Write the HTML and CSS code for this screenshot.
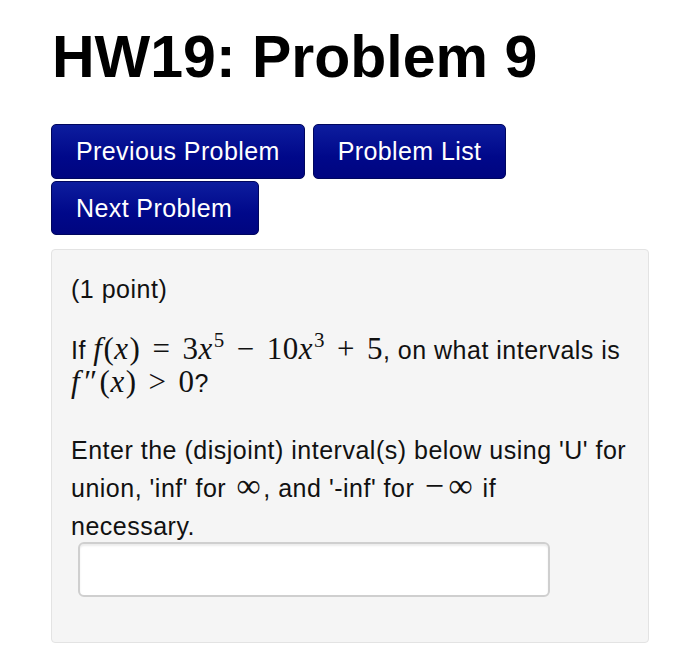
FILE: index.html
```html
<!DOCTYPE html>
<html lang="en">
<head>
    <meta charset="UTF-8">
    <meta name="viewport" content="width=device-width, initial-scale=1.0">
    <title>HW19: Problem 9</title>
    <link rel="stylesheet" href="styles.css">
</head>
<body>

    <!-- Title -->
    <h1 class="title">HW19: Problem 9</h1>

    <!-- Navigation -->
    <div class="nav">
        <a class="nav-btn" href="#">Previous Problem</a>
        <a class="nav-btn" href="#">Problem List</a>
        <a class="nav-btn" href="#">Next Problem</a>
    </div>

    <!-- Problem Body -->
    <div class="problem">
        <p class="points">(1 point)</p>

        <p class="question">
            If <span class="math"><i>f</i>(<i>x</i>)<span class="op">=</span>3<i>x</i><sup>5</sup><span class="op">&minus;</span>10<i>x</i><sup>3</sup><span class="op">+</span>5</span>, on what intervals is<br>
            <span class="math"><i>f</i><span class="prime">&Prime;</span>(<i>x</i>)<span class="op">&gt;</span>0</span>?
        </p>

        <p class="instructions">
            Enter the (disjoint) interval(s) below using 'U' for union, 'inf' for <span class="math inf">&infin;</span>, and '-inf' for <span class="math inf"><span class="neg">&minus;</span>&infin;</span> if<br>
            necessary.
        </p>

        <input type="text" class="answer">
    </div>

</body>
</html>
```

FILE: styles.css
```css
/* Basic reset */
* {
    margin: 0;
    padding: 0;
    box-sizing: border-box;
}

body {
    font-family: "Liberation Sans", Arial, sans-serif;
    background-color: #fff;
    color: #111;
    padding: 22px 51px 0 51px;
}

.title {
    font-size: 59px;
    font-weight: bold;
    line-height: 70px;
    color: #000;
    margin-left: 1px;
}

.nav {
    display: flex;
    flex-wrap: wrap;
    column-gap: 8px;
    row-gap: 2px;
    width: 470px;
    margin-top: 32px;
}

.nav-btn {
    display: block;
    height: 55px;
    line-height: 53px;
    padding: 0 24px;
    font-size: 25px;
    letter-spacing: 0.4px;
    color: #fff;
    text-decoration: none;
    background: linear-gradient(#0d1d9e, #00088a 60%, #000580);
    border: 1px solid #00065e;
    border-radius: 5px;
}

.nav-btn:last-child {
    height: 54px;
    padding-right: 26px;
}

.problem {
    margin-top: 14px;
    width: 598px;
    height: 394px;
    background-color: #f5f5f5;
    border: 1px solid #e3e3e3;
    border-radius: 4px;
    padding: 22px 19px;
    font-size: 25px;
    letter-spacing: 0.5px;
}

.points {
    line-height: 34px;
}

.question {
    margin-top: 28px;
    line-height: 33px;
}

.instructions {
    margin-top: 31px;
    line-height: 38px;
}

.math {
    font-family: "Liberation Serif", "Times New Roman", serif;
    font-size: 31px;
    letter-spacing: 0.5px;
    line-height: 0;
}

.math i {
    font-style: italic;
    margin-right: 1px;
}

.math .prime {
    margin: 0 2px 0 3px;
}

.math .op {
    margin: 0 12px;
}

.math sup {
    font-size: 21px;
    line-height: 0;
    vertical-align: 12px;
}

.inf {
    font-size: 34px;
    margin: 0 2px 0 3px;
}

.inf .neg {
    margin-right: 4px;
}

.answer {
    display: block;
    margin: -3px 0 0 7px;
    width: 472px;
    height: 55px;
    background: #fff;
    border: 2px solid #cfcfcf;
    border-radius: 6px;
    box-shadow: inset 0 2px 2px rgba(0, 0, 0, 0.08);
    font-size: 24px;
    padding: 0 10px;
}
```
